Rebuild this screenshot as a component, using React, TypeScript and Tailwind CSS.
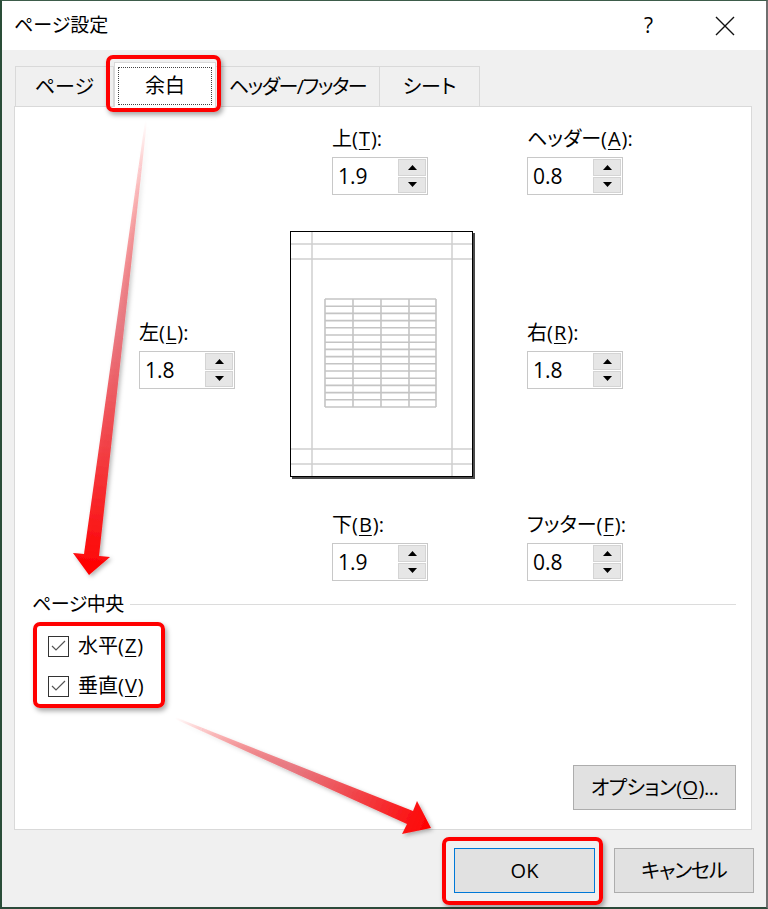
import type { ReactNode } from "react";

function Key({ children }: { children: ReactNode }) {
  return <span className="mx-[1px] underline decoration-1 underline-offset-[3px]">{children}</span>;
}

function Triangle({ up }: { up?: boolean }) {
  return (
    <svg width="9" height="5" viewBox="0 0 9 5">
      <polygon points={up ? "4.5,0 9,5 0,5" : "0,0 9,0 4.5,5"} fill="#000" />
    </svg>
  );
}

function Spinner({ value }: { value: string }) {
  return (
    <div className="flex h-[38px] w-[96px] items-center border border-[#c8c8c8] bg-white">
      <span className="flex-1 pl-[5px] text-[21px] leading-none">{value}</span>
      <div className="mr-[1px] flex h-[34px] w-[28px] flex-col gap-[1px]">
        <div className="flex flex-1 items-center justify-center border border-[#d4d4d4] bg-[#e6e6e6]">
          <Triangle up />
        </div>
        <div className="flex flex-1 items-center justify-center border border-[#d4d4d4] bg-[#e6e6e6]">
          <Triangle />
        </div>
      </div>
    </div>
  );
}

function Field({ label, value, className = "" }: { label: ReactNode; value: string; className?: string }) {
  return (
    <div className={`w-[96px] ${className}`}>
      <div className="h-[24px] whitespace-nowrap text-[20px] leading-[24px]">{label}</div>
      <div className="mt-[6px]">
        <Spinner value={value} />
      </div>
    </div>
  );
}

function Preview() {
  const rows = Array.from({ length: 16 }, (_, i) => 68 + i * 7.2);
  const cols = [35, 63, 91, 119, 146];
  return (
    <svg width="185" height="248" viewBox="0 0 185 248">
      <rect x="2" y="2" width="183" height="246" fill="#4a4a4a" />
      <rect x="0.5" y="0.5" width="182" height="245" fill="#fff" stroke="#000" />
      <g stroke="#cfcfcf" strokeWidth="1.5">
        <line x1="22" y1="1" x2="22" y2="245" />
        <line x1="162" y1="1" x2="162" y2="245" />
        <line x1="1" y1="13" x2="182" y2="13" />
        <line x1="1" y1="28" x2="182" y2="28" />
        <line x1="1" y1="218" x2="182" y2="218" />
        <line x1="1" y1="233" x2="182" y2="233" />
      </g>
      <g stroke="#c4c4c4" strokeWidth="1.6">
        {rows.map((y) => (
          <line key={y} x1="35" y1={y} x2="146" y2={y} />
        ))}
        {cols.map((x) => (
          <line key={x} x1={x} y1="68" x2={x} y2="176" />
        ))}
      </g>
    </svg>
  );
}

function Check({ label }: { label: ReactNode }) {
  return (
    <div className="flex h-[40px] items-center">
      <div className="flex h-[21px] w-[21px] items-center justify-center border border-[#333] bg-white">
        <svg width="15" height="12" viewBox="0 0 15 12">
          <polyline points="1,6 5,10 14,1" fill="none" stroke="#555" strokeWidth="1.2" />
        </svg>
      </div>
      <span className="ml-[9px] text-[20px] leading-none">{label}</span>
    </div>
  );
}

const redBox = "pointer-events-none absolute rounded-[7px] border-4 border-[#ff0000] shadow-[2px_3px_5px_rgba(0,0,0,0.35)]";

export default function App() {
  return (
    <div className="relative h-[909px] w-[768px] overflow-hidden bg-[#f0f0f0] font-['Open_Sans','Noto_Sans_CJK_JP',sans-serif] text-[20px] text-[#000] [font-feature-settings:'palt']">
      <div className="flex h-full flex-col border-t border-r-2 border-b-2 border-l-2 border-t-[#3d5c4a] border-r-[#6f6f6f] border-b-[#2c4a3a] border-l-[#2a4d38]">
        {/* title bar */}
        <div className="flex h-[49px] items-center bg-white">
          <span className="pl-[12px] text-[19px]">ページ設定</span>
          <span className="ml-auto text-[21px]">?</span>
          <span className="ml-[62px] mr-[31px] flex h-[20px] w-[20px] items-center justify-center">
            <svg width="20" height="20" viewBox="0 0 20 20">
              <path d="M1 1 L19 19 M19 1 L1 19" stroke="#111" strokeWidth="1.4" />
            </svg>
          </span>
        </div>

        {/* tabs */}
        <div className="ml-[13px] mt-[12px] flex h-[44px] items-end">
          <div className="flex h-[40px] w-[99px] items-center justify-center border border-b-0 border-[#d9d9d9]">ページ</div>
          <div className="relative z-10 -mb-px flex h-[45px] w-[102px] items-center justify-center border border-b-0 border-[#d9d9d9] bg-white px-[3px] pt-[4px] pb-[2px]">
            <div className="flex h-full w-full items-center justify-center border border-dotted border-[#444]">余白</div>
          </div>
          <div className="flex h-[40px] w-[164px] items-center justify-center border border-b-0 border-l-0 border-[#d9d9d9] tracking-[-1.5px]">ヘッダー/フッター</div>
          <div className="flex h-[40px] w-[100px] items-center justify-center border border-b-0 border-l-0 border-[#d9d9d9]">シート</div>
        </div>

        {/* panel */}
        <div className="ml-[12px] flex h-[724px] w-[738px] flex-col border border-[#d9d9d9] bg-white pt-[20px] pb-[19px] pr-[15px]">
          <div className="flex">
            <Field className="ml-[317px]" label={<>上(<Key>T</Key>):</>} value="1.9" />
            <Field className="ml-[99px]" label={<>ヘッダー(<Key>A</Key>):</>} value="0.8" />
          </div>

          <div className="mt-[36px] flex items-center">
            <Field className="ml-[124px]" label={<>左(<Key>L</Key>):</>} value="1.8" />
            <div className="ml-[55px]">
              <Preview />
            </div>
            <Field className="ml-[52px]" label={<>右(<Key>R</Key>):</>} value="1.8" />
          </div>

          <div className="mt-[34px] flex">
            <Field className="ml-[317px]" label={<>下(<Key>B</Key>):</>} value="1.9" />
            <Field className="ml-[99px]" label={<>フッター(<Key>F</Key>):</>} value="0.8" />
          </div>

          <div className="mt-[11px] flex h-[24px] items-center pl-[17px]">
            <span className="text-[19px] leading-[24px] tracking-[-0.5px]">ページ中央</span>
            <div className="ml-[6px] h-px flex-1 bg-[#dcdcdc]" />
          </div>

          <div className="mt-[10px] flex flex-col pl-[33px]">
            <Check label={<>水平(<Key>Z</Key>)</>} />
            <Check label={<>垂直(<Key>V</Key>)</>} />
          </div>

          <div className="mt-auto flex justify-end">
            <div className="flex h-[45px] w-[163px] items-center justify-center border border-[#adadad] bg-[#e1e1e1] tracking-[-0.5px]">
              オプション(<Key>O</Key>)...
            </div>
          </div>
        </div>

        {/* footer buttons */}
        <div className="mt-[18px] flex justify-end gap-[19px] pr-[12px]">
          <div className="flex h-[45px] w-[141px] items-center justify-center border border-[#0078d7] bg-[#e1e1e1]">OK</div>
          <div className="flex h-[45px] w-[140px] items-center justify-center border border-[#adadad] bg-[#e1e1e1] tracking-[-1px]">キャンセル</div>
        </div>
      </div>

      {/* annotation highlights */}
      <div className={`${redBox} left-[106px] top-[55px] h-[57px] w-[115px]`} />
      <div className={`${redBox} left-[33px] top-[622px] h-[86px] w-[132px]`} />
      <div className={`${redBox} left-[442px] top-[837px] h-[68px] w-[161px]`} />

      {/* annotation arrows */}
      <svg className="pointer-events-none absolute inset-0" width="768" height="909" viewBox="0 0 768 909">
        <defs>
          <linearGradient id="g1" gradientUnits="userSpaceOnUse" x1="146" y1="121" x2="89" y2="574">
            <stop offset="0" stopColor="#ff0000" stopOpacity="0" />
            <stop offset="0.45" stopColor="#e86a74" stopOpacity="0.85" />
            <stop offset="1" stopColor="#ff0000" />
          </linearGradient>
          <linearGradient id="g2" gradientUnits="userSpaceOnUse" x1="175" y1="718" x2="431" y2="828">
            <stop offset="0" stopColor="#ff0000" stopOpacity="0" />
            <stop offset="0.45" stopColor="#e86a74" stopOpacity="0.85" />
            <stop offset="1" stopColor="#ff0000" />
          </linearGradient>
          <filter id="sh" x="-20%" y="-20%" width="140%" height="140%">
            <feDropShadow dx="2" dy="2" stdDeviation="2" floodColor="#000" floodOpacity="0.3" />
          </filter>
        </defs>
        <polygon filter="url(#sh)" fill="url(#g1)" points="145,121 147,121 99,556 110,557 89,575 73,553 84,554" />
        <polygon filter="url(#sh)" fill="url(#g2)" points="175,717 413,811 417,801 431,828 402,834 407,824 175,719" />
      </svg>
    </div>
  );
}
